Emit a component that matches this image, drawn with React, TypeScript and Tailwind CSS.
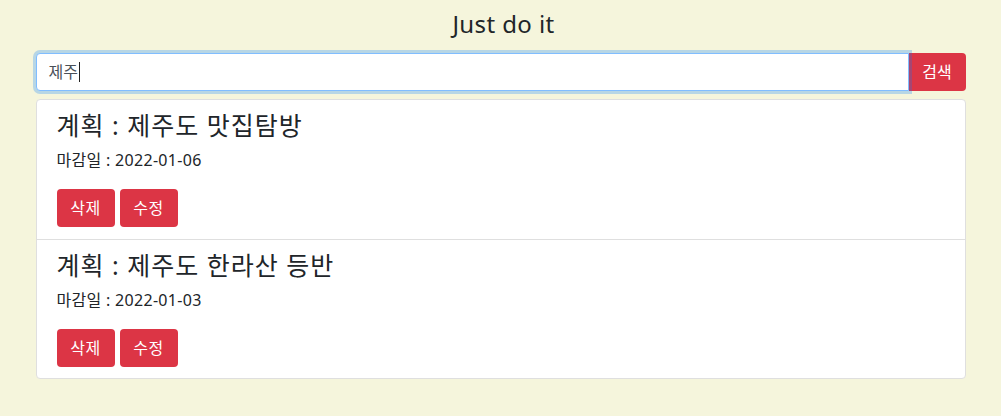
import React from "react";

const items = [
  { title: "제주도 맛집탐방", date: "2022-01-06" },
  { title: "제주도 한라산 등반", date: "2022-01-03" },
];

export default function App() {
  return (
    <div
      className="min-h-[416px] w-full bg-[#f5f5dc] text-[#212529]"
      style={{ fontFamily: '"Noto Sans", "Noto Sans CJK KR", sans-serif' }}
    >
      <div className="mx-auto w-[930px]">
        <h3 className="pt-[9px] pl-[6px] text-center text-[24px] font-normal leading-[30px] tracking-[0.4px] text-[#212529]">
          Just do it
        </h3>
        <div className="mt-[14px] flex h-[38px]">
          <div className="relative z-10 flex flex-1 items-center rounded-l-[4px] border border-[#80bdff] bg-white px-[12px] shadow-[0_0_0_3px_rgba(0,123,255,0.25)]">
            <span className="text-[16px] leading-[24px] text-[#495057]">제주</span>
            <span className="ml-[1px] h-[20px] w-[1px] bg-[#222]" />
          </div>
          <button className="w-[57px] rounded-r-[4px] bg-[#dc3545] text-[16px] leading-[24px] text-white">
            검색
          </button>
        </div>
        <div className="mt-[8px] rounded-[4px] border border-[#dfdfdf] bg-white">
          {items.map((it, i) => (
            <div
              key={i}
              className={
                "h-[139px] px-[20px] pt-[11px] " + (i > 0 ? "border-t border-[#dfdfdf]" : "")
              }
            >
              <h4 className="mb-[8px] text-[25px] font-normal leading-[29px] tracking-[1px]">
                계획 : {it.title}
              </h4>
              <p className="mb-[17px] text-[16px] leading-[24px] tracking-[0.3px]">
                마감일 : {it.date}
              </p>
              <div className="flex gap-[5px]">
                <button className="h-[38px] w-[58px] rounded-[4px] bg-[#dc3545] text-[16px] tracking-[0.5px] text-white">
                  삭제
                </button>
                <button className="h-[38px] w-[58px] rounded-[4px] bg-[#dc3545] text-[16px] tracking-[0.5px] text-white">
                  수정
                </button>
              </div>
            </div>
          ))}
        </div>
      </div>
    </div>
  );
}
